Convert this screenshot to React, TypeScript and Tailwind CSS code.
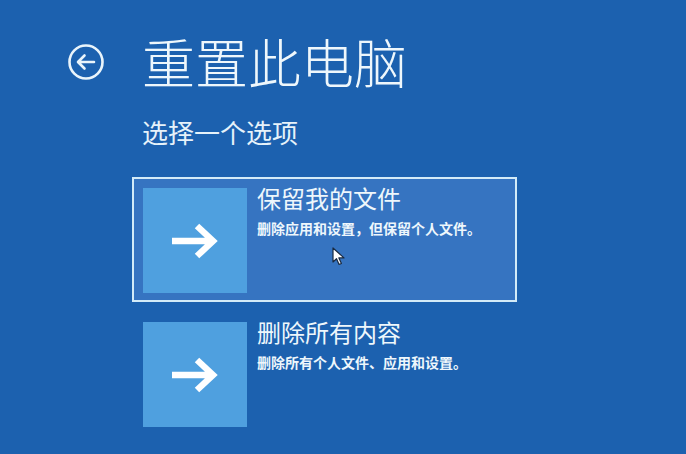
import React from 'react';

type Option = {
  title: string;
  desc: string;
  selected?: boolean;
};

const options: Option[] = [
  { title: '保留我的文件', desc: '删除应用和设置，但保留个人文件。', selected: true },
  { title: '删除所有内容', desc: '删除所有个人文件、应用和设置。' },
];

const font = 'font-["Noto_Sans_CJK_SC","Noto_Sans",sans-serif]';

function BackIcon() {
  return (
    <svg width="38" height="38" viewBox="0 0 38 38" fill="none">
      <circle cx="19" cy="19" r="16.5" stroke="#e9f4fb" strokeWidth="2.6" />
      <path d="M27 19H11.5M17.5 12.5L11 19l6.5 6.5" stroke="#e9f4fb" strokeWidth="2.6" strokeLinecap="round" strokeLinejoin="round" />
    </svg>
  );
}

function ArrowIcon() {
  return (
    <svg width="52" height="40" viewBox="0 0 52 40" fill="none">
      <path d="M3 20h40M28 5l16 15-16 15" stroke="#ffffff" strokeWidth="6.5" strokeLinejoin="miter" />
    </svg>
  );
}

function Cursor() {
  return (
    <svg width="13" height="19" viewBox="0 0 13 19" className="absolute left-[332px] top-[247px]">
      <path d="M1 1v14l3.5-3.3 2.6 5.8 2.3-1-2.5-5.6H12z" fill="#ffffff" stroke="#1a2a40" strokeWidth="1.2" strokeLinejoin="round" />
    </svg>
  );
}

function OptionCard({ option }: { option: Option }) {
  return (
    <div
      className={`flex gap-[10px] w-[385px] h-[125px] p-[9px] ${
        option.selected ? 'bg-[#3674c1] border-2 border-[#d3ebf8]' : 'border-2 border-transparent'
      }`}
    >
      <div className="w-[104px] h-[105px] shrink-0 bg-[#4fa0df] flex items-center justify-center">
        <ArrowIcon />
      </div>
      <div className="flex flex-col -mt-[3px]">
        <div className="text-[24px] leading-[26px] text-[#eef7fc]">{option.title}</div>
        <div className="mt-[9px] text-[14px] leading-[16px] font-bold text-[#eef7fc]">{option.desc}</div>
      </div>
    </div>
  );
}

export default function App() {
  return (
    <div className={`relative w-[686px] h-[454px] overflow-hidden bg-[#1c61af] ${font}`}>
      <div className="flex items-center pl-[67px] pt-[35px]">
        <BackIcon />
        <h1 className="ml-[37px] text-[53px] leading-[53px] font-light text-[#eef7fc]">重置此电脑</h1>
      </div>
      <div className="pl-[132px]">
        <div className="mt-[30px] pl-[10px] text-[26px] leading-[28px] text-[#e6f2fa]">选择一个选项</div>
        <div className="mt-[31px] flex flex-col gap-[9px]">
          {options.map(o => (
            <OptionCard key={o.title} option={o} />
          ))}
        </div>
      </div>
      <Cursor />
    </div>
  );
}
